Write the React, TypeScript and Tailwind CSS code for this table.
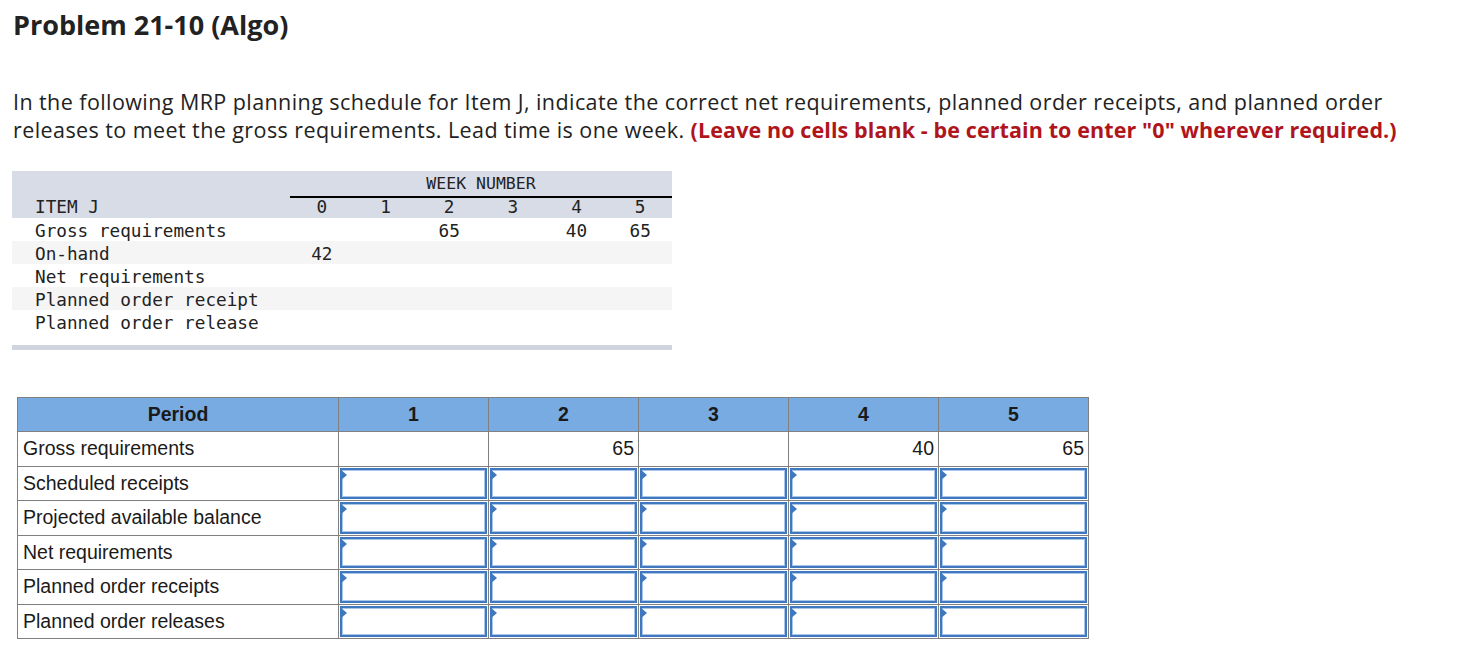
const weeks = [0, 1, 2, 3, 4, 5];

const topRows: { label: string; values: Record<number, string>; shade: boolean }[] = [
  { label: 'Gross requirements', values: { 2: '65', 4: '40', 5: '65' }, shade: false },
  { label: 'On-hand', values: { 0: '42' }, shade: true },
  { label: 'Net requirements', values: {}, shade: false },
  { label: 'Planned order receipt', values: {}, shade: true },
  { label: 'Planned order release', values: {}, shade: false },
];

const inputRows = [
  'Scheduled receipts',
  'Projected available balance',
  'Net requirements',
  'Planned order receipts',
  'Planned order releases',
];

const gross = ['', '65', '', '40', '65'];

const InputCell = () => (
  <td className="relative border border-[#808080] p-0 h-[34.5px]">
    <div className="absolute inset-[1px] border-2 border-[#3f78bf] shadow-[inset_0_0_0_1px_#a9c5ea] bg-white" />
    <svg className="absolute left-[1px] top-[2px]" width="7" height="12" viewBox="0 0 7 12">
      <path d="M0 0 L7 6 L0 12 Z" fill="#3f78bf" />
    </svg>
  </td>
);

export default function App() {
  return (
    <div className="bg-white min-h-screen text-[#1f1f1f] pl-[13px] pt-[7px]" style={{ fontFamily: '"Open Sans", Lato, sans-serif' }}>
      <h1 className="text-[27px] font-bold leading-[36px] text-[#222]">Problem 21-10 (Algo)</h1>

      <p className="mt-[45px] text-[21.5px] leading-[28px] text-[#222] whitespace-nowrap tracking-[0.42px]">
        In the following MRP planning schedule for Item J, indicate the correct net requirements, planned order receipts, and planned order
        <br />
        releases to meet the gross requirements. Lead time is one week.{' '}
        <span className="font-bold text-[#b0151b] tracking-[0.1px]">(Leave no cells blank - be certain to enter "0" wherever required.)</span>
      </p>

      {/* MRP schedule */}
      <div
        className="mt-[27px] -ml-px w-[660px] text-[17.7px] leading-[27px] text-[#222]"
        style={{ fontFamily: '"DejaVu Sans Mono", "Liberation Mono", monospace' }}
      >
        <div className="bg-[#d8dce6]">
          <div className="grid grid-cols-[278px_repeat(6,1fr)] h-[23px]">
            <div />
            <div className="col-span-6 border-b-2 border-black text-center text-[16.5px] leading-[25px]">WEEK NUMBER</div>
          </div>
          <div className="grid grid-cols-[278px_repeat(6,1fr)] h-[24px] overflow-hidden">
            <div className="pl-[23px]">ITEM J</div>
            {weeks.map((w) => (
              <div key={w} className="text-center">{w}</div>
            ))}
          </div>
        </div>
        {topRows.map((r) => (
          <div key={r.label} className={`grid grid-cols-[278px_repeat(6,1fr)] h-[23px] overflow-hidden ${r.shade ? 'bg-[#f5f5f5]' : 'bg-white'}`}>
            <div className="pl-[23px]">{r.label}</div>
            {weeks.map((w) => (
              <div key={w} className="text-center">{r.values[w] ?? ''}</div>
            ))}
          </div>
        ))}
        <div className="h-[12px]" />
        <div className="h-[5px] bg-[#d0d4de]" />
      </div>

      {/* Answer table */}
      <table
        className="mt-[47px] ml-[4px] border-collapse text-[19.5px] text-[#1a1a1a]"
        style={{ fontFamily: '"Liberation Sans", Arial, sans-serif' }}
      >
        <colgroup>
          <col className="w-[321px]" />
          {[1, 2, 3, 4, 5].map((c) => (
            <col key={c} className="w-[150px]" />
          ))}
        </colgroup>
        <thead>
          <tr className="bg-[#78abe2] h-[34px]">
            <th className="border border-[#808080] font-bold text-center">Period</th>
            {[1, 2, 3, 4, 5].map((c) => (
              <th key={c} className="border border-[#808080] font-bold text-center">{c}</th>
            ))}
          </tr>
        </thead>
        <tbody>
          <tr className="h-[34.5px]">
            <td className="border border-[#808080] pl-[5px]">Gross requirements</td>
            {gross.map((g, i) => (
              <td key={i} className="border border-[#808080] text-right pr-[4px]">{g}</td>
            ))}
          </tr>
          {inputRows.map((label) => (
            <tr key={label} className="h-[34.5px]">
              <td className="border border-[#808080] pl-[5px]">{label}</td>
              {[1, 2, 3, 4, 5].map((c) => (
                <InputCell key={c} />
              ))}
            </tr>
          ))}
        </tbody>
      </table>
    </div>
  );
}
